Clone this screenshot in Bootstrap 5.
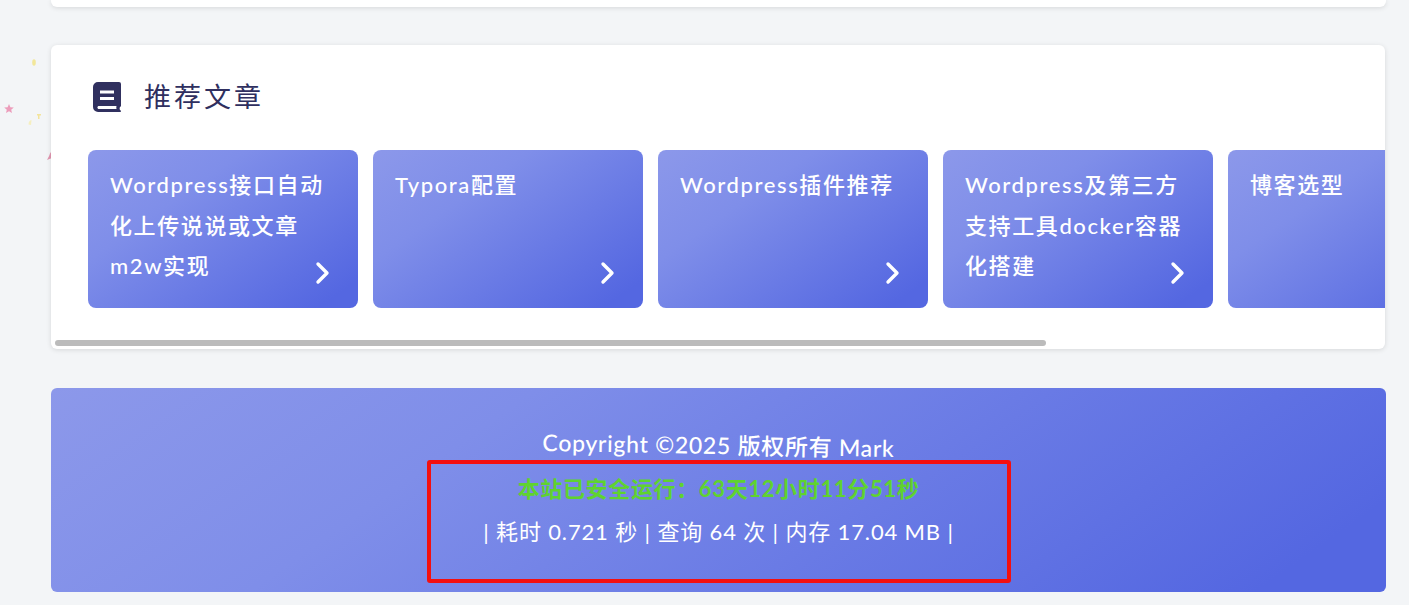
<!DOCTYPE html>
<html lang="zh">
<head>
<meta charset="utf-8">
<title>推荐文章</title>
<link rel="stylesheet" href="https://cdn.jsdelivr.net/npm/bootstrap@5.3.0/dist/css/bootstrap.min.css">
<style>
html,body{height:605px;overflow:hidden}
body{background:#f3f5f7;font-family:"Lato","Noto Sans CJK SC",sans-serif;color:#2f2f5f;position:relative}
.page-wrap{margin:0 23px 0 51px;display:flex;flex-direction:column}
.top-sheet{height:7px;background:#fff;border-radius:0 0 6px 6px;box-shadow:0 1px 5px rgba(0,0,0,.12);margin-bottom:38px}
.rec-sheet{height:304px;background:#fff;border-radius:6px;box-shadow:0 1px 5px rgba(0,0,0,.12);padding:30px 0 0 37px;margin:0 1px 39px 0;position:relative;overflow:hidden}
.rec-title{height:44px;margin:0 0 31px;font-size:27px;font-weight:400;letter-spacing:3px;color:#2f2f5f;line-height:44px;gap:23px;padding-left:5px}
.rec-row{gap:15px;overflow:hidden}
.rec-tile{flex:0 0 270px;height:158px;border-radius:8px;background:linear-gradient(145deg,#8c98ea 0%,#7f8ee9 32%,#5467e1 92%);color:#fff;padding:15px 22px;font-size:22px;line-height:40.5px;letter-spacing:1.6px;position:relative}
.rec-tile p{margin:0;font-weight:500}
.rec-arrow{position:absolute;right:28px;top:111px;width:15px;height:24px}
.bar-track{position:absolute;left:4px;top:295px;width:991px;height:6px;border-radius:3px;background:#bbb}
.foot-panel{height:204px;border-radius:6px;background:linear-gradient(145deg,#8c98ea 0%,#7f8ee9 30%,#5467e1 92%);color:#fff;text-align:center;padding-top:40px;position:relative}
.foot-copy{font-size:23px;line-height:34px;transform:rotate(1deg);font-weight:500;margin:0 0 10px;letter-spacing:.7px}
.foot-run{font-size:22px;line-height:34px;font-weight:700;color:#5fd32f;margin:0 0 9px;letter-spacing:.65px}
.foot-stat{font-size:22px;line-height:34px;margin:0;letter-spacing:.85px}
.red-mark{position:absolute;left:427px;top:460px;width:584px;height:123px;border:4px solid #f40f0f;border-radius:3px}
.spark{position:absolute;display:block}
</style>
</head>
<body>
<svg class="spark" style="left:3px;top:103px" width="12" height="12" viewBox="0 0 12 12"><path d="M6 1l1.400 3.200 3.400.3-2.600 2.200.8 3.400L6 8.300 3 10.100l.8-3.400L1.200 4.500l3.400-.3z" fill="#ec9dbb"/></svg>
<svg class="spark" style="left:46px;top:151px" width="9" height="10" viewBox="0 0 9 10"><path d="M4.500 1l1.100 3.500 2.400 4.500-3.500-1.600L1 9l2.300-4.500z" fill="#e296b0"/></svg>
<svg class="spark" style="left:31px;top:58px" width="6" height="9" viewBox="0 0 6 9"><ellipse cx="3" cy="4.500" rx="1.800" ry="3.200" fill="#f2e79a"/></svg>
<svg class="spark" style="left:36px;top:113px" width="6" height="7" viewBox="0 0 6 7"><path d="M1 1h4v1.500H3.500V6H2V2.500H1z" fill="#f3e49c"/></svg>
<svg class="spark" style="left:27px;top:119px" width="6" height="7" viewBox="0 0 6 7"><path d="M4.500 1C2.500 1.500 1.500 3 1.500 5.500L4 6z" fill="#f5efc0"/></svg>

<div class="page-wrap">
  <div class="top-sheet"></div>
  <section class="rec-sheet">
    <h2 class="rec-title d-flex align-items-center">
      <svg width="28" height="30" viewBox="0 0 28 30" aria-hidden="true"><path d="M5 0h21a2 2 0 0 1 2 2v21.500c0 .8-.4 1.200-1 1.500-.5.800-.5 2 0 3 .6.300 1 .8 1 1.200 0 .5-.5.800-1 .8H5a5 5 0 0 1-5-5V5a5 5 0 0 1 5-5z" fill="#30305f"/><path d="M7 8.500h14v3H7zM7 15h14v3H7zM6 24h17.500c-.3 1-.3 2 0 3H6c-1 0-1.600-.6-1.600-1.500S5 24 6 24z" fill="#fff"/></svg>
      <span>推荐文章</span>
    </h2>
    <div class="rec-row d-flex">
      <article class="rec-tile"><p>Wordpress接口自动化上传说说或文章m2w实现</p><svg class="rec-arrow" viewBox="0 0 15 24"><path d="M3 3l9 9-9 9" fill="none" stroke="#fff" stroke-width="3.400" stroke-linecap="round" stroke-linejoin="round"/></svg></article>
      <article class="rec-tile"><p>Typora配置</p><svg class="rec-arrow" viewBox="0 0 15 24"><path d="M3 3l9 9-9 9" fill="none" stroke="#fff" stroke-width="3.400" stroke-linecap="round" stroke-linejoin="round"/></svg></article>
      <article class="rec-tile"><p>Wordpress插件推荐</p><svg class="rec-arrow" viewBox="0 0 15 24"><path d="M3 3l9 9-9 9" fill="none" stroke="#fff" stroke-width="3.400" stroke-linecap="round" stroke-linejoin="round"/></svg></article>
      <article class="rec-tile"><p>Wordpress及第三方支持工具docker容器化搭建</p><svg class="rec-arrow" viewBox="0 0 15 24"><path d="M3 3l9 9-9 9" fill="none" stroke="#fff" stroke-width="3.400" stroke-linecap="round" stroke-linejoin="round"/></svg></article>
      <article class="rec-tile"><p>博客选型</p></article>
    </div>
    <div class="bar-track"></div>
  </section>
  <footer class="foot-panel">
    <p class="foot-copy">Copyright ©2025 版权所有 Mark</p>
    <p class="foot-run">本站已安全运行：63天12小时11分51秒</p>
    <p class="foot-stat">| 耗时 0.721 秒 | 查询 64 次 | 内存 17.04 MB |</p>
  </footer>
</div>
<div class="red-mark"></div>
<script src="https://cdn.jsdelivr.net/npm/bootstrap@5.3.0/dist/js/bootstrap.bundle.min.js"></script>
</body>
</html>
